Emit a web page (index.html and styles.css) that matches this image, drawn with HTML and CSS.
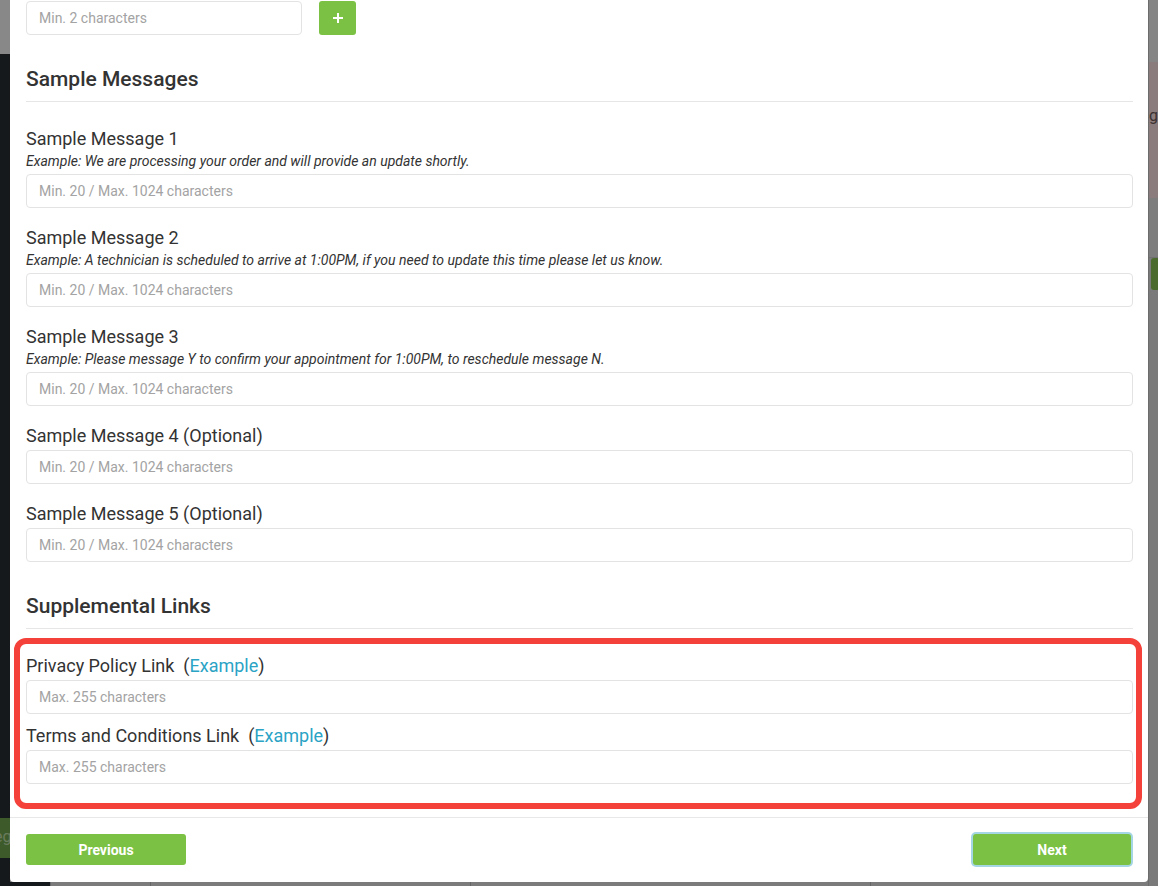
FILE: index.html
```html
<!DOCTYPE html>
<html lang="en">
<head>
<meta charset="utf-8">
<title>Sample Messages</title>
<link rel="stylesheet" href="styles.css">
</head>
<body>
<div class="page">
  <div class="side side-left">
    <div class="seg seg-grey"></div>
    <div class="seg seg-dark"></div>
    <div class="seg seg-green"><span class="ghost">eg</span></div>
    <div class="seg seg-dark2"></div>
  </div>

  <div class="center">
    <div class="modal">
      <div class="top-row">
        <input class="field field-short" type="text" placeholder="Min. 2 characters">
        <button class="add-btn" type="button" aria-label="Add">
          <svg width="12" height="12" viewBox="0 0 12 12"><path d="M6 1v10M1 6h10" stroke="#fff" stroke-width="2" fill="none"/></svg>
        </button>
      </div>

      <h2 class="section-title">Sample Messages</h2>
      <div class="groups">
        <div class="group">
          <label class="label">Sample Message 1</label>
          <p class="example">Example: We are processing your order and will provide an update shortly.</p>
          <input class="field" type="text" placeholder="Min. 20 / Max. 1024 characters">
        </div>
        <div class="group">
          <label class="label">Sample Message 2</label>
          <p class="example">Example: A technician is scheduled to arrive at 1:00PM, if you need to update this time please let us know.</p>
          <input class="field" type="text" placeholder="Min. 20 / Max. 1024 characters">
        </div>
        <div class="group">
          <label class="label">Sample Message 3</label>
          <p class="example">Example: Please message Y to confirm your appointment for 1:00PM, to reschedule message N.</p>
          <input class="field" type="text" placeholder="Min. 20 / Max. 1024 characters">
        </div>
        <div class="group">
          <label class="label">Sample Message 4 (Optional)</label>
          <input class="field" type="text" placeholder="Min. 20 / Max. 1024 characters">
        </div>
        <div class="group">
          <label class="label">Sample Message 5 (Optional)</label>
          <input class="field" type="text" placeholder="Min. 20 / Max. 1024 characters">
        </div>
      </div>

      <h2 class="section-title section-title-2">Supplemental Links</h2>
      <div class="links highlight">
        <div class="group">
          <label class="label">Privacy Policy Link&nbsp; (<a class="ex-link" href="#">Example</a>)</label>
          <input class="field" type="text" placeholder="Max. 255 characters">
        </div>
        <div class="group">
          <label class="label">Terms and Conditions Link&nbsp; (<a class="ex-link" href="#">Example</a>)</label>
          <input class="field" type="text" placeholder="Max. 255 characters">
        </div>
      </div>

      <div class="footer">
        <button class="btn btn-prev" type="button">Previous</button>
        <button class="btn btn-next" type="button">Next</button>
      </div>
    </div>
    <div class="under">
      <div class="u u1"></div>
      <div class="u u2"></div>
      <div class="u u3"></div>
      <div class="u u4"></div>
      <div class="u u5"></div>
    </div>
  </div>

  <div class="side side-right">
    <div class="seg r1"></div>
    <div class="seg r2"><span class="ghost ghost-r">gr</span></div>
    <div class="seg r3"></div>
    <div class="seg r4"></div>
    <div class="seg r5"></div>
  </div>
</div>
</body>
</html>
```

FILE: styles.css
```css
* { box-sizing: border-box; }

html, body {
  margin: 0;
  padding: 0;
  height: 886px;
  overflow: hidden;
  background: #7a7a7a;
  font-family: Roboto, "Liberation Sans", Arial, sans-serif;
  color: #333;
}

.page {
  display: flex;
  width: 1158px;
  height: 886px;
}

.side {
  width: 10px;
  display: flex;
  flex-direction: column;
  overflow: hidden;
  flex: none;
}
.side-right { width: 10px; background: #7a7a7a; border-left: 1px solid #6c6c6c; }

.seg { flex: none; position: relative; overflow: hidden; }
.seg-grey { height: 54px; background: #888; }
.seg-dark { height: 764px; background: #16191c; }
.seg-green { height: 40px; background: #3d5a2a; }
.seg-dark2 { flex: 1; background: #16191c; }

.r1 { height: 62px; background: #858585; }
.r2 { height: 136px; background: #8a7c7c; }
.r3 { height: 60px; background: #7d7d7d; border-bottom: 1px solid #707070; }
.r4 { height: 32px; background: #4a6a2e; margin-left: 2px; border-radius: 3px 0 0 3px; }
.r5 { flex: 1; background: #7a7a7a; }

.ghost {
  position: absolute;
  font-size: 16px;
  color: #6a7a5e;
  left: -6px;
  top: 9px;
}
.ghost-r { color: #3a3030; left: 0; top: 44px; }

.center {
  width: 1138px;
  flex: none;
  display: flex;
  flex-direction: column;
}

.modal {
  height: 882px;
  background: #fff;
  padding: 0 15px 0 16px;
  border-radius: 0 0 4px 4px;
  display: flex;
  flex-direction: column;
}

.under {
  flex: 1;
  display: flex;
}
.u { height: 4px; }
.u1 { width: 40px; background: #16191c; }
.u2 { width: 100px; background: #7b7b7b; border-left: 1px solid #666; }
.u3 { width: 320px; background: #7b7b7b; border-left: 1px solid #666; }
.u4 { width: 400px; background: #7b7b7b; border-left: 1px solid #666; }
.u5 { flex: 1; background: #7b7b7b; border-left: 1px solid #666; }

.top-row {
  display: flex;
  align-items: center;
  margin-top: 1px;
}

.field {
  display: block;
  width: 100%;
  height: 34px;
  border: 1px solid #e3e3e3;
  border-radius: 4px;
  padding: 0 12px;
  font-family: Roboto, "Liberation Sans", Arial, sans-serif;
  font-size: 14px;
  color: #333;
  background: #fff;
  outline: none;
}
.field::placeholder { color: #a3a3a3; }

.field-short { width: 276px; }

.add-btn {
  width: 37px;
  height: 34px;
  margin-left: 17px;
  border: none;
  border-radius: 3px;
  background: #7bc143;
  display: flex;
  align-items: center;
  justify-content: center;
  padding: 0;
}

.section-title {
  margin: 32px 0 26px;
  font-size: 21px;
  line-height: 24px;
  font-weight: 500;
  color: #333;
  padding-bottom: 10px;
  border-bottom: 1px solid #e6e6e6;
}

.groups {
  display: flex;
  flex-direction: column;
  gap: 19px;
}

.label {
  display: block;
  font-size: 18px;
  line-height: 22px;
  font-weight: 400;
  color: #333;
  margin-bottom: 3px;
}

.example {
  margin: -1px 0 4px;
  font-size: 14px;
  line-height: 18px;
  font-style: italic;
  color: #333;
}

.links {
  display: flex;
  flex-direction: column;
  gap: 11px;
  position: relative;
}

.ex-link {
  color: #2aa3c5;
  text-decoration: none;
}

.highlight::after {
  content: "";
  position: absolute;
  top: -17px;
  left: -12px;
  right: -9px;
  bottom: -25px;
  border: 6px solid #f4413a;
  border-radius: 12px;
  pointer-events: none;
}

.footer {
  margin: 33px -15px 0 -16px;
  padding: 16px 15px 17px 16px;
  border-top: 1px solid #e8e8e8;
  display: flex;
  justify-content: space-between;
  align-items: center;
}

.btn {
  height: 31px;
  border: none;
  border-radius: 3px;
  background: #7bc143;
  color: #fff;
  font-family: Roboto, "Liberation Sans", Arial, sans-serif;
  font-size: 14px;
  font-weight: 700;
  padding: 0;
}
.btn-prev { width: 160px; }
.btn-next {
  width: 158px;
  margin-right: 2px;
  box-shadow: 0 0 0 2px #a5d6e4;
}
```
